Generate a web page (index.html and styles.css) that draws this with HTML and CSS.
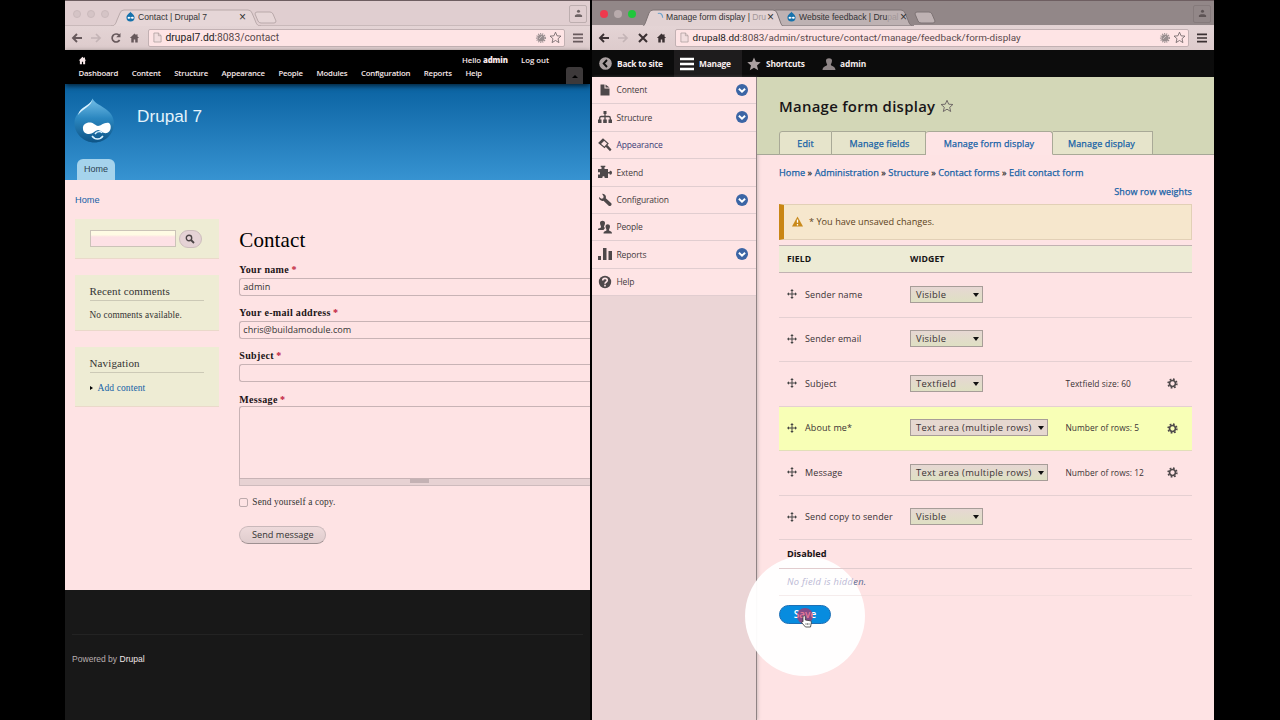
FILE: index.html
```html
<!DOCTYPE html>
<html lang="en">
<head>
  <meta charset="UTF-8">
  <title>Contact | Drupal 7 - Manage form display | Drupal 8</title>
  <link rel="stylesheet" href="styles.css">
</head>
<body>
  <!-- Shared icons -->
  <svg class="defs" width="0" height="0">
    <symbol id="i-back" viewBox="0 0 12 12"><path d="M11 6H2M6 2 2 6l4 4" fill="none" stroke="currentColor" stroke-width="1.900"/></symbol>
    <symbol id="i-fwd" viewBox="0 0 12 12"><path d="M1 6h9M6 2l4 4-4 4" fill="none" stroke="currentColor" stroke-width="1.700"/></symbol>
    <symbol id="i-reload" viewBox="0 0 12 12"><path d="M9.600 8A4 4 0 1 1 9 3.200" fill="none" stroke="currentColor" stroke-width="1.700"/><path d="M10.500 1v4.300H6.200z" fill="currentColor"/></symbol>
    <symbol id="i-stop" viewBox="0 0 12 12"><path d="m2 2 8 8M10 2l-8 8" stroke="currentColor" stroke-width="2.100"/></symbol>
    <symbol id="i-home" viewBox="0 0 12 12"><path d="M6 1 1 6h1.500v5h2.700V7.500h1.600V11h2.700V6H11L9.300 4.300V2H8v1z" fill="currentColor"/></symbol>
    <symbol id="i-page" viewBox="0 0 10 12"><path d="M1 1h5l3 3v7H1zM6 1v3h3" fill="#f2dedf" stroke="#a89a9b" stroke-width=".8"/></symbol>
    <symbol id="i-gearball" viewBox="0 0 12 12"><circle cx="6" cy="6" r="3.600" fill="#9a8e90"/><circle cx="6" cy="6" r="4.300" fill="none" stroke="#9a8e90" stroke-width="1.500" stroke-dasharray="1 1.100"/><path d="M4 7l3-3" stroke="#d8caca" stroke-width=".8"/></symbol>
    <symbol id="i-star" viewBox="0 0 14 14"><path d="m7 1.300 1.700 3.900 4.200.3-3.200 2.800 1 4.200L7 10.200l-3.700 2.300 1-4.200-3.200-2.800 4.200-.3z" fill="none" stroke="currentColor" stroke-width=".9"/></symbol>
    <symbol id="i-burger" viewBox="0 0 12 12"><path d="M1 2.300h10M1 6h10M1 9.700h10" stroke="currentColor" stroke-width="1.700"/></symbol>
    <symbol id="i-person" viewBox="0 0 10 10"><circle cx="5" cy="2.500" r="1.700" fill="currentColor"/><path d="M1 9V7.200C2 5.500 8 5.500 9 7.200V9z" fill="currentColor"/></symbol>
    <symbol id="i-drop" viewBox="0 0 10 12"><path d="M5 .5c.5 2 4.500 3 4.500 6.700a4.500 4.300 0 0 1-9 0C.5 3.500 4.500 2.500 5 .5z" fill="#1672ac"/><path d="M1.700 7c1.300-1.700 2.400-.4 3.300.3.900-.7 2.600-2 3.700-.3-.3 2-2.500 1.800-3.500.8-1 .9-3.300 1.400-3.500-.8z" fill="#fff"/></symbol>
    <symbol id="i-more" viewBox="0 0 12 12"><circle cx="6" cy="6" r="6" fill="#3c65a5"/><path d="m2.900 4.700 3.100 3 3.100-3" fill="none" stroke="#fff" stroke-width="1.900"/></symbol>
    <symbol id="i-move" viewBox="0 0 10 10"><path d="M5 1v8M1 5h8" stroke="#444" stroke-width="1"/><path d="m5 0 1.700 2H3.300zM5 10l1.700-2H3.300zM0 5l2-1.700v3.400zM10 5 8 3.300v3.400z" fill="#444"/></symbol>
    <symbol id="i-cog" viewBox="0 0 12 12"><circle cx="6" cy="6" r="3.200" fill="none" stroke="#4e484a" stroke-width="1.700"/><circle cx="6" cy="6" r="4.800" fill="none" stroke="#4e484a" stroke-width="1.700" stroke-dasharray="1.885 1.885"/></symbol>
  </svg>

  <!-- Drupal 7 browser window -->
  <div class="window window-left">
    <div class="tabstrip">
      <svg class="tab-shapes" width="525" height="25">
        <path d="M46 25c4 0 5-3 6-6l3-7q1-3 4-3h124q3 0 4 3l3 7c1 3 2 6 6 6" fill="#e6d6d7" stroke="#b9a9aa"/>
        <path d="M192 11h13q2 0 3 2l3 7q0 2-2 2h-13q-2 0-3-2l-3-7q0-2 2-2z" fill="#e6d6d7" stroke="#b9a9aa"/>
      </svg>
      <div class="lights"><i></i><i></i><i></i></div>
      <div class="tab tab-contact"><svg width="9" height="11"><use href="#i-drop"/></svg><span class="tab-title">Contact | Drupal 7</span><span class="close">×</span></div>
      <div class="user-button"><svg width="9" height="9"><use href="#i-person"/></svg></div>
    </div>
    <div class="toolbar">
      <svg class="b" width="12" height="12"><use href="#i-back"/></svg>
      <svg class="b off" width="12" height="12"><use href="#i-fwd"/></svg>
      <svg class="b" width="12" height="12"><use href="#i-reload"/></svg>
      <svg class="b" width="11" height="12"><use href="#i-home"/></svg>
      <div class="address">
        <svg width="9" height="11"><use href="#i-page"/></svg>
        <span class="url">drupal7.dd:<em>8083/contact</em></span>
        <svg width="12" height="12"><use href="#i-gearball"/></svg>
        <svg class="star" width="13" height="13"><use href="#i-star"/></svg>
      </div>
      <svg class="menu" width="12" height="12"><use href="#i-burger"/></svg>
    </div>

    <div class="d7-admin">
      <div class="d7-row">
        <svg width="9" height="9"><use href="#i-home"/></svg>
        <span class="hello">Hello <b>admin</b></span>
        <span class="logout">Log out</span>
      </div>
      <div class="d7-row d7-links">
        <span>Dashboard</span><span>Content</span><span>Structure</span><span>Appearance</span><span>People</span><span>Modules</span><span>Configuration</span><span>Reports</span><span>Help</span>
      </div>
      <div class="d7-toggle"></div>
    </div>

    <div class="d7-header">
      <div class="d7-brand">
        <svg width="40" height="46" viewBox="0 0 40 46">
          <defs><linearGradient id="drop" x1="0" y1="0" x2="0" y2="1"><stop offset="0" stop-color="#74bfe8"/><stop offset=".45" stop-color="#2b87c0"/><stop offset="1" stop-color="#0d5487"/></linearGradient></defs>
          <path d="M18.500.5C21 8 40 10 40 25.500 40 36 31 44.500 20.500 44.500S.5 36 .5 25C.5 12 16 9 18.500.5z" fill="url(#drop)"/>
          <path d="M18 2c0 6-10 9-14 15C6 8 16 8 18 2z" fill="#d9f1ff"/>
          <path d="M9 31c-1-6 7-8 11-5 2 1 3 2 4 2 3 0 6-4 11-3 3 2 2 9-2 10-4 1-6-3-9-3-4 1-5 4-9 4-3 0-6-2-6-5z" fill="#fff"/>
          <path d="M18 38c3 4 8 4 11 0M21 36c2-3 6-3 7-1" fill="none" stroke="#d9f1ff" stroke-width="1.500"/>
        </svg>
        <span>Drupal 7</span>
      </div>
      <div class="d7-tab">Home</div>
    </div>

    <div class="d7-page">
      <div class="d7-crumb">Home</div>
      <div class="d7-columns">
        <div class="d7-sidebar">
          <div class="block block-search">
            <div class="search-box"></div>
            <div class="search-button"><svg width="10" height="10" viewBox="0 0 10 10"><circle cx="4" cy="4" r="2.700" fill="none" stroke="#4b4345" stroke-width="1.400"/><path d="m6 6 3 3" stroke="#4b4345" stroke-width="1.800"/></svg></div>
          </div>
          <div class="block block-comments">
            <h2>Recent comments</h2>
            <p>No comments available.</p>
          </div>
          <div class="block block-nav">
            <h2>Navigation</h2>
            <p class="add"><i></i><a>Add content</a></p>
          </div>
        </div>
        <div class="d7-content">
          <h1>Contact</h1>
          <label>Your name <b>*</b></label>
          <div class="field">admin</div>
          <label>Your e-mail address <b>*</b></label>
          <div class="field">chris@buildamodule.com</div>
          <label>Subject <b>*</b></label>
          <div class="field"></div>
          <label>Message <b>*</b></label>
          <div class="area"></div>
          <div class="grippie"><i></i></div>
          <div class="copy"><i></i><span>Send yourself a copy.</span></div>
          <div class="send">Send message</div>
        </div>
      </div>
    </div>
    <div class="d7-footer"><p>Powered by <b>Drupal</b></p></div>
  </div>

  <!-- Drupal 8 browser window -->
  <div class="window window-right">
    <div class="tabstrip">
      <svg class="tab-shapes" width="622" height="25">
        <path d="M184 25c-2-5-4-16 0-16h125q3 0 4 3l3 7c1 3 2 6 6 6z" fill="#beb2b3" stroke="#7d7374"/>
        <path d="M325 11h12q2 0 3 2l3 7q0 2-2 2h-12q-2 0-3-2l-3-7q0-2 2-2z" fill="#beb2b3" stroke="#7d7374"/>
        <path d="M48 26c4 0 5-3 6-6l3-8q1-3 4-3h120q3 0 4 3l3 8c1 3 2 6 6 6" fill="#e2d2d3" stroke="#7d7374"/>
      </svg>
      <div class="lights"><i class="red"></i><i></i><i class="green"></i></div>
      <div class="tab tab-form"><svg width="7" height="11" viewBox="0 0 8 11"><path d="M1 2c3-1 5.500 1 5.500 5" fill="none" stroke="#6fa3cb" stroke-width="1.300"/></svg><span class="tab-title">Manage form display | <span class="fade">Dru</span></span><span class="close">×</span></div>
      <div class="tab tab-feedback"><svg width="9" height="11"><use href="#i-drop"/></svg><span class="tab-title">Website feedback | Dru<span class="fade">pal</span></span><span class="close">×</span></div>
      <div class="user-button"><svg width="9" height="9"><use href="#i-person"/></svg></div>
    </div>
    <div class="toolbar">
      <svg class="b" width="12" height="12"><use href="#i-back"/></svg>
      <svg class="b off" width="12" height="12"><use href="#i-fwd"/></svg>
      <svg class="b" width="12" height="12"><use href="#i-stop"/></svg>
      <svg class="b" width="11" height="12"><use href="#i-home"/></svg>
      <div class="address">
        <svg width="9" height="11"><use href="#i-page"/></svg>
        <span class="url">drupal8.dd:<em>8083/admin/structure/contact/manage/feedback/form-display</em></span>
        <svg width="12" height="12"><use href="#i-gearball"/></svg>
        <svg class="star" width="13" height="13"><use href="#i-star"/></svg>
      </div>
      <svg class="menu" width="12" height="12"><use href="#i-burger"/></svg>
    </div>

    <div class="d8-bar">
      <div class="d8-item item-back"><svg width="13" height="13" viewBox="0 0 13 13"><circle cx="6.500" cy="6.500" r="6.300" fill="#aaa0a1"/><path d="M8 3 4.700 6.500 8 10" fill="none" stroke="#0d0d0d" stroke-width="1.900"/></svg><span>Back to site</span></div>
      <div class="d8-item item-manage"><svg width="14" height="14" viewBox="0 0 14 14"><path d="M0 2h14M0 7h14M0 12h14" stroke="#fff" stroke-width="2.400"/></svg><span>Manage</span></div>
      <div class="d8-item item-short"><svg width="14" height="14" viewBox="0 0 14 14"><path d="m7 .5 1.900 4.300 4.800.4L10 8.500l1.200 4.800L7 10.700l-4.200 2.600L4 8.500.3 5.200l4.800-.4z" fill="#aaa0a1"/></svg><span>Shortcuts</span></div>
      <div class="d8-item item-user"><svg width="14" height="14" viewBox="0 0 14 14"><path d="M4 3.500C4 .5 10 .5 10 3.500c0 2-.8 3-1.200 4.300.5 1.700 4.500 1.200 4.700 5.200H.5C.7 9 4.700 9.500 5.200 7.800 4.800 6.500 4 5.500 4 3.500z" fill="#8f8687"/></svg><span>admin</span></div>
    </div>

    <div class="d8-body">
      <div class="tray">
        <div class="tray-item"><svg width="14" height="14" viewBox="0 0 14 14"><path d="M2.500 1.500h4v4h5v7h-9zM7.500 1.500l4 3h-4z" fill="#4e484a"/></svg><span>Content</span><svg class="more" width="12" height="12"><use href="#i-more"/></svg></div>
        <div class="tray-item"><svg width="14" height="14" viewBox="0 0 14 14"><path d="M5.500 1h3v3h-3zM0 9.500h3.500V13H0zM5.200 9.500h3.600V13H5.200zM10.500 9.500H14V13h-3.500z" fill="#4e484a"/><path d="M7 3v7M1.700 10V8q0-1.500 1.500-1.500h7.600q1.500 0 1.500 1.500v2" fill="none" stroke="#4e484a" stroke-width="1.300"/></svg><span>Structure</span><svg class="more" width="12" height="12"><use href="#i-more"/></svg></div>
        <div class="tray-item appearance"><svg width="14" height="14" viewBox="0 0 14 14"><path d="m1 5 4-4 5 4.500-3.500 4z" fill="none" stroke="#4e484a" stroke-width="1.200"/><path d="m1 5 4-4 1.500 1.500-4 4zM7.500 8.500 9.500 7l4 4.500-1.500 1.700z" fill="#4e484a"/></svg><span>Appearance</span></div>
        <div class="tray-item"><svg width="14" height="14" viewBox="0 0 14 14"><path d="M0 4h3.500V2H2.700V.7h4.600V2h-.8v2H10v3h1.500c0-2 2.500-1.500 2.500.7s-2.500 2.700-2.500.8H10V13H6.500c1-2.500-3-2.500-2 0H0V9.500h2V7.300H0z" fill="#4e484a"/></svg><span>Extend</span></div>
        <div class="tray-item"><svg width="14" height="14" viewBox="0 0 14 14"><path d="M4 .8c3 0 4.500 2 3.800 4.500l5.500 5c1 1.800-1 3.500-2.600 2.500L5.500 7.700C3 8.500.8 6.500 1 4l2.300 1.700 2-.5.3-2z" fill="#4e484a"/></svg><span>Configuration</span><svg class="more" width="12" height="12"><use href="#i-more"/></svg></div>
        <div class="tray-item"><svg width="14" height="14" viewBox="0 0 14 14"><path d="M2 3c0-3 5-3 5 0 0 2-1 2.500-1 4l1 1-1.500 2H0C0 7 3 9 3 7 3 5.500 2 5 2 3z" fill="#4e484a"/><path d="M7.500 6.500c0-3 4.500-3 4.500 0 0 1.500-1 2.500-1 3.500 0 1.500 3 .5 3 3.500H5.500c0-3 3-2 3-3.500 0-1-1-2-1-3.500z" fill="#4e484a"/></svg><span>People</span></div>
        <div class="tray-item"><svg width="14" height="14" viewBox="0 0 14 14"><path d="M0 9h3v4H0zM5 1h3.500v12H5zM10.500 4H14v9h-3.500z" fill="#4e484a"/></svg><span>Reports</span><svg class="more" width="12" height="12"><use href="#i-more"/></svg></div>
        <div class="tray-item"><svg width="14" height="14" viewBox="0 0 14 14"><circle cx="7" cy="7" r="6.200" fill="#4e484a"/><path d="M4.700 5.500C4.700 2.700 9.300 2.700 9.300 5.500 9.300 7 7 7 7 8.800M7 9.700v1.700" fill="none" stroke="#fde3e5" stroke-width="1.600"/></svg><span>Help</span></div>
      </div>

      <div class="main">
        <div class="d8-header">
          <h1><span>Manage form display</span><svg width="14" height="14"><use href="#i-star"/></svg></h1>
          <div class="d8-tabs">
            <a class="t-edit">Edit</a><a class="t-fields">Manage fields</a><a class="t-form active">Manage form display</a><a class="t-display">Manage display</a>
          </div>
        </div>
        <div class="d8-content">
          <div class="d8-crumb"><a>Home</a> » <a>Administration</a> » <a>Structure</a> » <a>Contact forms</a> » <a>Edit contact form</a></div>
          <div class="weights"><a>Show row weights</a></div>
          <div class="warning"><svg width="11" height="11" viewBox="0 0 11 11"><path d="M5.500.5 11 10.500H0z" fill="#c98a1b"/><path d="M5.500 3.500v3.300M5.500 8v1.400" stroke="#fff" stroke-width="1.300"/></svg><span>* You have unsaved changes.</span></div>
          <div class="thead"><span class="c-field">FIELD</span><span>WIDGET</span></div>
          <div class="row"><svg width="10" height="10"><use href="#i-move"/></svg><span class="name">Sender name</span><div class="select">Visible</div></div>
          <div class="row"><svg width="10" height="10"><use href="#i-move"/></svg><span class="name">Sender email</span><div class="select">Visible</div></div>
          <div class="row"><svg width="10" height="10"><use href="#i-move"/></svg><span class="name">Subject</span><div class="select">Textfield</div><span class="summary">Textfield size: 60</span><svg class="cog" width="11" height="11"><use href="#i-cog"/></svg></div>
          <div class="row changed"><svg width="10" height="10"><use href="#i-move"/></svg><span class="name">About me*</span><div class="select wide">Text area (multiple rows)</div><span class="summary">Number of rows: 5</span><svg class="cog" width="11" height="11"><use href="#i-cog"/></svg></div>
          <div class="row"><svg width="10" height="10"><use href="#i-move"/></svg><span class="name">Message</span><div class="select wide">Text area (multiple rows)</div><span class="summary">Number of rows: 12</span><svg class="cog" width="11" height="11"><use href="#i-cog"/></svg></div>
          <div class="row"><svg width="10" height="10"><use href="#i-move"/></svg><span class="name">Send copy to sender</span><div class="select">Visible</div></div>
          <div class="region">Disabled</div>
          <div class="empty"><span class="faded">No field is hidd</span>en.</div>
          <div class="save">Save</div>
        </div>
      </div>
    </div>

    <!-- Click highlight and pointer -->
    <div class="spotlight"></div>
    <div class="click"></div>
    <svg class="pointer" width="11" height="13" viewBox="0 0 11 13"><path d="M3 .7c1 0 1.300.6 1.300 1.300v3l5 .8c1 .3 1.200 1 1 2L9.500 12h-5L1 8c-.8-1 .3-1.800 1-1.200V2C2 1.200 2.300.7 3 .7z" fill="#fff" stroke="#333" stroke-width=".8"/><path d="M5 8v2M6.500 8v2M8 8v2" stroke="#555" stroke-width=".6"/></svg>
  </div>
</body>
</html>
```
FILE: styles.css
```css
/* Page: two browser windows side by side */
body {
  margin: 0;
  height: 720px;
  display: flex;
  gap: 2px;
  padding-left: 65px;
  background: #000;
  overflow: hidden;
  box-sizing: border-box;
  font-family: "Open Sans", "Noto Sans", sans-serif;
  font-size: 9px;
  color: #333;
}

* { box-sizing: border-box; }
h1, h2, p { margin: 0; font-weight: normal; }
svg { display: block; flex: none; }
a { color: #1461a6; }
.defs { position: absolute; }

.window {
  height: 720px;
  display: flex;
  flex-direction: column;
  background: #fee3e4;
  white-space: nowrap;
  overflow: hidden;
  flex: none;
}
.window-left { width: 525px; }
.window-right { width: 622px; position: relative; }

/* Browser tabs */
.tabstrip {
  position: relative;
  height: 26px;
  flex: none;
  display: flex;
  align-items: center;
  padding: 7px 3px 0 8px;
  background: #e0ced0;
  border-top: 1px solid #6e5e61;
  border-bottom: 1px solid #c9b9ba;
}
.window-right .tabstrip { background: #928788; border-bottom-color: #e2d2d3; }
.tab-shapes { position: absolute; left: 0; top: 0; }
.lights { display: flex; gap: 6px; width: 53px; margin-top: -5px; }
.lights i { width: 8px; height: 8px; border-radius: 50%; background: #d5c4c6; border: 1px solid #cbbabc; }
.window-right .lights { width: 57px; }
.window-right .lights i { background: #b9abac; border: 0; }
.window-right .lights .red { background: #ef3a4e; }
.window-right .lights .green { background: #21c63b; }
.tab {
  position: relative;
  display: flex;
  align-items: center;
  font-family: "Liberation Sans", Arial, sans-serif;
  font-size: 8.600px;
  color: #333;
}
.tab-title { flex: 1; margin-left: 3px; }
.fade { color: #a39899; }
.close { font-size: 12px; line-height: 9px; padding-top: 1px; color: #333; }
.tab-contact { width: 120px; }
.tab-form { width: 117px; }
.tab-form .tab-title { margin-left: 2px; letter-spacing: -.02px; }
.tab-feedback { width: 120px; margin-left: 13px; }
.tab-feedback .tab-title { letter-spacing: -.04px; }
.user-button {
  position: relative;
  width: 18px;
  height: 18px;
  margin: -6px 0 0 auto;
  display: flex;
  align-items: center;
  justify-content: center;
  border: 1px solid #bdaeaf;
  border-radius: 2px;
  color: #6f6465;
}
.window-right .user-button { border-color: #857a7b; color: #5d5354; }

/* Browser toolbar */
.toolbar {
  height: 24px;
  flex: none;
  display: flex;
  align-items: center;
  padding: 0 6px;
  background: linear-gradient(#e4d4d5, #ddcbcc);
  color: #67595c;
}
.window-right .toolbar { color: #3a3032; }
.b { margin-right: 7.400px; }
.off { color: #c4b4b6; }
.address {
  flex: 1;
  height: 18px;
  margin: 0 7px 1px 0;
  display: flex;
  align-items: center;
  padding: 0 2px 0 4px;
  background: #fee4e5;
  border: 1px solid #c2b1b3;
  border-radius: 2px;
  color: #6f6466;
}
.url {
  flex: 1;
  margin-left: 4px;
  font-family: Roboto, sans-serif;
  font-size: 10.300px;
  color: #222;
}
.window-right .url { font-size: 9.920px; }
.url em { font-style: normal; color: #59494b; }
.star { margin-left: 2px; }

/* Drupal 7 admin menu */
.d7-admin {
  position: relative;
  height: 34px;
  flex: none;
  background: #000;
  color: #f7e8e9;
  font-weight: 600;
  font-size: 7.800px;
  padding: 4px 0 0 13px;
  z-index: 1;
  box-shadow: 0 2px 5px #000a;
}
.d7-row { height: 12.500px; display: flex; align-items: center; }
.hello { margin-left: 375px; width: 59px; letter-spacing: -.1px; }
.d7-links { gap: 13.600px; padding-left: .5px; }
.d7-links span { letter-spacing: -.19px; }
.d7-toggle {
  position: absolute;
  right: 7px;
  bottom: 0;
  width: 17px;
  height: 17px;
  background: #3d393a;
  border-radius: 3px 3px 0 0;
}
.d7-toggle::after {
  content: "";
  position: absolute;
  left: 6px;
  top: 8px;
  border: 3px solid transparent;
  border-top: 0;
  border-bottom: 3px solid #000;
}

/* Drupal 7 header */
.d7-header {
  height: 96px;
  flex: none;
  display: flex;
  flex-direction: column;
  background: linear-gradient(#0a62a1, #3793d1);
  padding: 14px 0 0 9px;
}
.d7-brand { display: flex; height: 61px; font-family: "Liberation Sans", Arial, sans-serif; font-size: 17.200px; color: #e3f3fc; }
.d7-brand span { margin: 8px 0 0 23px; }
.d7-tab {
  width: 38px;
  height: 21px;
  margin-left: 3px;
  line-height: 21px;
  text-align: center;
  background: #a5d3ec;
  border-radius: 6px 6px 0 0;
  font-family: "Liberation Sans", Arial, sans-serif;
  font-size: 9px;
  color: #2c4250;
}

/* Drupal 7 page */
.d7-page { height: 410px; flex: none; padding: 13px 0 0 10px; font-family: "Liberation Serif", Georgia, serif; }
.d7-crumb { height: 14px; line-height: 14px; font-family: "Liberation Sans", Arial, sans-serif; font-size: 9.200px; color: #1461a6; }
.d7-columns { display: flex; }
.d7-sidebar { width: 144px; margin-right: 20.300px; padding-top: 12px; flex: none; }
.block { background: #eeecd4; padding: 0 15px 0 14.500px; margin-bottom: 16px; border-bottom: 1px solid #ead9ca; }
.block-search { height: 40px; display: flex; align-items: center; gap: 3px; }
.search-box { width: 86px; height: 17px; background: linear-gradient(#fffbe4 25%, #fde1e5 40%); border: 1px solid #cbc3b8; }
.search-button {
  width: 23px;
  height: 18px;
  border-radius: 9px;
  background: #e5d2d5;
  border: 1px solid #cdbdbd;
  display: flex;
  align-items: center;
  justify-content: center;
}
.block-comments { height: 56px; }
.block-nav { height: 60px; }
.block h2 { height: 26px; padding-top: 9px; line-height: 14px; font-size: 11px; color: #333; border-bottom: 1px solid #ccc9b6; letter-spacing: .13px; }
.block p { font-size: 9.300px; line-height: 12px; padding-top: 8px; letter-spacing: .1px; }
.block .add { display: flex; align-items: center; padding-top: 9px; }
.add i { border: 2.500px solid transparent; border-left: 3px solid #000; border-right: 0; margin: 0 5px 0 0; }
.add a { font-size: 9.500px; }

.d7-content { flex: 1; padding-top: 20px; }
.d7-content h1 { height: 35px; line-height: 26px; font-size: 21px; color: #000; letter-spacing: .1px; }
.d7-content label { display: block; height: 16px; line-height: 16px; font-size: 10px; font-weight: bold; color: #1a1315; letter-spacing: .33px; }
.d7-content label b { color: #c01738; margin-left: -.5px; }
.field, .area {
  height: 18px;
  line-height: 16px;
  padding-left: 3px;
  border: 1px solid #c8b3b5;
  border-right: 0;
  border-radius: 3px 0 0 3px;
  font-family: "Open Sans", sans-serif;
  font-size: 9.100px;
}
.field { margin-bottom: 9.200px; }
.area { height: 73px; margin: -2px 0 0; border-radius: 3px 0 0 0; }
.grippie { height: 7px; background: #e7d2d3; border: 1px solid #cebbbd; border-width: 0 0 1px 1px; }
.grippie i { display: block; width: 19px; height: 4px; margin-left: 170px; background: #c4b2b4; }
.copy { display: flex; align-items: center; height: 14px; margin-top: 9px; font-size: 9.400px; letter-spacing: .12px; }
.copy i { width: 9px; height: 9px; margin-top: 1px; border: 1px solid #bcaaac; border-radius: 2px; margin-right: 4px; }
.send {
  width: 87px;
  height: 18px;
  margin-top: 17px;
  line-height: 16px;
  text-align: center;
  border-radius: 9px;
  border: 1px solid #c9b8ba;
  border-bottom-color: #9e9091;
  background: linear-gradient(#eedadb, #dfcccd);
  font-family: "Open Sans", sans-serif;
  font-size: 9.200px;
}
.d7-footer { flex: 1; background: #181818; padding: 44px 7px 0; }
.d7-footer p { border-top: 1px solid #232323; padding-top: 19px; font-family: "Liberation Sans", Arial, sans-serif; font-size: 8.550px; color: #b8aeaf; }
.d7-footer b { font-weight: normal; color: #efe5e6; }

/* Drupal 8 toolbar */
.d8-bar { height: 27px; flex: none; display: flex; background: #0c0c0c; color: #f7edee; font-weight: bold; font-size: 8.400px; letter-spacing: -.24px; }
.d8-item { display: flex; align-items: center; gap: 5px; padding-left: 7px; }
.item-back { width: 82px; }
.item-manage { width: 68px; padding-left: 6px; background: #1e1c1d; }
.item-short { width: 73px; padding-left: 5px; letter-spacing: -.17px; }
.item-user { gap: 4px; letter-spacing: -.1px; }

/* Drupal 8 tray */
.d8-body { flex: 1; display: flex; }
.tray { width: 165px; flex: none; background: #ebd5d6; border-right: 1px solid #8f8384; box-shadow: 1px 0 3px #8886; }
.tray-item {
  height: 27.400px;
  display: flex;
  align-items: center;
  padding: 0 8px .5px 6px;
  background: #fee4e5;
  border-bottom: 1px solid #e1cdd0;
  font-size: 8.500px;
  letter-spacing: -.15px;
  color: #443a3d;
}
.tray-item span { margin-left: 4.500px; }
.appearance { color: #3b3c75; }
.more { margin-left: auto; }

/* Drupal 8 page */
.main { flex: 1; }
.d8-header { height: 78px; background: #d3d7b7; border-bottom: 1px solid #a6a797; padding: 19px 0 0 22px; }
.d8-header h1 { display: flex; align-items: center; gap: 5px; height: 20px; margin-bottom: 15px; font-size: 14.900px; letter-spacing: .29px; font-weight: 600; color: #181518; }
.d8-header h1 svg { color: #665f60; }
.d8-tabs { display: flex; height: 24px; }
.d8-tabs a { border: 1px solid #a9a997; border-left-width: 0; background: #e6e4cb; text-align: center; line-height: 23px; font-size: 9px; letter-spacing: .12px; }
.d8-tabs, .d8-crumb, .weights { -webkit-text-stroke: .25px; }
.t-edit { width: 53px; }
.d8-tabs .t-edit { border-left-width: 1px; border-radius: 3px 0 0 0; }
.d8-tabs .t-fields { width: 94px; padding-left: 2px; }
.t-form { width: 127px; }
.d8-tabs .t-display { width: 100px; padding-right: 2px; }
.d8-tabs .active { background: #fee4e5; border-bottom-color: #fee4e5; border-radius: 3px 3px 0 0; }
.d8-content { padding: 8px 22px 0; font-size: 9px; }
.d8-crumb { height: 19px; line-height: 19px; font-size: 9.200px; letter-spacing: .05px; }
.weights { height: 19px; line-height: 19px; text-align: right; letter-spacing: .12px; }
.warning {
  height: 36px;
  margin: 3px 0 5px;
  display: flex;
  align-items: center;
  gap: 6px;
  padding: 0 0 1px 8px;
  border: 1px solid #e2d0b6;
  border-left: 5px solid #c98614;
  background: #f6e7cd;
  color: #5c4321;
  font-size: 9.200px;
}
.thead { height: 28px; display: flex; align-items: center; padding-left: 8px; background: #edebd5; border: solid #c2b2b2; border-width: 1px 0; font-weight: bold; font-size: 8.700px; letter-spacing: .1px; color: #171416; }
.c-field { width: 123px; }
.row { height: 44.500px; display: flex; align-items: center; padding: 0 0 1px 8px; border-bottom: 1px solid #e5d0d2; color: #3a3235; letter-spacing: .12px; }
.name { width: 105px; margin-left: 8px; }
.select {
  position: relative;
  width: 73px;
  height: 17px;
  line-height: 15px;
  padding-left: 5px;
  border: 1px solid #a79d98;
  background: linear-gradient(#e6d7d3, #dfe0c3);
  font-size: 9.400px;
  letter-spacing: .3px;
}
.select.wide { width: 138px; }
.select::after { content: ""; position: absolute; right: 3px; top: 6px; border: 3px solid transparent; border-top: 4.500px solid #111; border-bottom: 0; }
.summary { width: 101px; margin-left: 82.500px; font-size: 8.400px; letter-spacing: .05px; }
.wide + .summary { margin-left: 17.500px; }
.cog { margin-top: 1px; }
.changed { background: #f8ffb6; border-color: #e2dfb9; }
.changed .select { background: #e6d8d0; }
.region { position: relative; z-index: 2; height: 28.500px; line-height: 28px; padding-left: 8px; border-bottom: 1px solid #e1ccce; font-weight: bold; font-size: 9.200px; color: #171416; }
.empty { position: relative; z-index: 2; height: 27.500px; line-height: 26px; padding-left: 8px; border-bottom: 1px solid #e8d3d56b; font-style: italic; font-size: 9.300px; letter-spacing: .3px; color: #596991; }
.faded { color: #bbb9d5; }
.save {
  position: relative;
  z-index: 2;
  width: 52px;
  height: 19px;
  margin-top: 9px;
  line-height: 17px;
  text-align: center;
  border-radius: 10px;
  background: #078cdf;
  border: 1px solid #1e6fb5;
  color: #fff;
  font-weight: 600;
  font-size: 10px;
}

/* Click highlight */
.spotlight { position: absolute; z-index: 1; left: 153px; top: 556px; width: 120px; height: 120px; border-radius: 50%; background: #fffffff5; }
.click { position: absolute; z-index: 3; left: 205px; top: 608px; width: 16px; height: 16px; border-radius: 50%; background: #d81f4f99; }
.pointer { position: absolute; z-index: 4; left: 209px; top: 615px; }
```
